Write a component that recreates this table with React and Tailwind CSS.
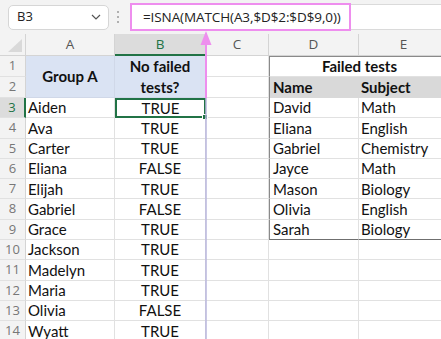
import React from "react";

const grid = "border-r border-b border-[#e1e1e1]";
const cellFont = { fontFamily: "Lato, 'Open Sans', sans-serif" };

const groupA = [
  ["Aiden", "TRUE"],
  ["Ava", "TRUE"],
  ["Carter", "TRUE"],
  ["Eliana", "FALSE"],
  ["Elijah", "TRUE"],
  ["Gabriel", "FALSE"],
  ["Grace", "TRUE"],
  ["Jackson", "TRUE"],
  ["Madelyn", "TRUE"],
  ["Maria", "TRUE"],
  ["Olivia", "FALSE"],
  ["Wyatt", "TRUE"],
];

const failed = [
  ["David", "Math"],
  ["Eliana", "English"],
  ["Gabriel", "Chemistry"],
  ["Jayce", "Math"],
  ["Mason", "Biology"],
  ["Olivia", "English"],
  ["Sarah", "Biology"],
];

function RowNum({ n, active }) {
  return (
    <div
      className={`flex items-center justify-center border-b border-[#e1e1e1] text-[13px] ${
        active
          ? "border-r-2 border-r-[#217346] bg-[#dcdcdc] text-[#217346]"
          : "border-r border-r-[#d4d4d4] bg-[#f3f3f3] text-[#777]"
      }`}
      style={{ fontFamily: "'Open Sans', sans-serif" }}
    >
      {n}
    </div>
  );
}

export default function App() {
  return (
    <div
      className="relative h-[339px] w-[441px] overflow-hidden bg-white"
      style={{ fontFamily: "'Open Sans', 'Noto Sans', sans-serif" }}
    >
      {/* barre de formule */}
      <div className="flex h-[34px] items-center bg-[#f3f3f3]">
        <div className="ml-2 flex h-[25px] w-[101px] items-center justify-between rounded-[5px] border border-[#d6d6d6] bg-white pl-[8px] pr-[6px] text-[13px] text-[#222]">
          <span>B3</span>
          <svg width="12" height="12" viewBox="0 0 12 12">
            <path d="M2 4 L6 8 L10 4" fill="none" stroke="#555" strokeWidth="1.2" />
          </svg>
        </div>
        <div className="ml-[8px] flex flex-col gap-[3px]">
          <span className="h-[2px] w-[2px] rounded-full bg-[#9a9a9a]" />
          <span className="h-[2px] w-[2px] rounded-full bg-[#9a9a9a]" />
          <span className="h-[2px] w-[2px] rounded-full bg-[#9a9a9a]" />
        </div>
        <div className="ml-[11px] flex h-[26px] flex-1 items-center border-y border-[#dadada] bg-white">
          <div className="-my-[2px] flex h-[28px] w-[221px] items-center border-2 border-[#ee8eee] pl-[11px] text-[13.5px] tracking-[-0.1px] text-[#222]">
            =ISNA(MATCH(A3,$D$2:$D$9,0))
          </div>
        </div>
      </div>

      {/* feuille */}
      <div
        className="grid grid-cols-[26px_89px_91px_63px_90px_90px] grid-rows-[22px_21px_21px] auto-rows-[20.3px]"
        style={cellFont}
      >
        {/* en-têtes de colonnes */}
        <div className="relative border-r border-b border-[#d4d4d4] bg-[#f3f3f3]">
          <svg className="absolute right-[3px] bottom-[3px]" width="14" height="13" viewBox="0 0 14 13">
            <polygon points="14,0 14,13 0,13" fill="#d9d9d9" />
          </svg>
        </div>
        <div className="flex items-center justify-center border-r border-b border-[#d4d4d4] bg-[#f3f3f3] text-[13.5px] text-[#555]" style={{ fontFamily: "'Open Sans', sans-serif" }}>A</div>
        <div className="flex items-center justify-center border-r border-b-2 border-r-[#d4d4d4] border-b-[#217346] bg-[#dcdcdc] text-[13.5px] text-[#217346]" style={{ fontFamily: "'Open Sans', sans-serif" }}>B</div>
        <div className="flex items-center justify-center border-r border-b border-[#d4d4d4] bg-[#f3f3f3] text-[13.5px] text-[#555]" style={{ fontFamily: "'Open Sans', sans-serif" }}>C</div>
        <div className="flex items-center justify-center border-r border-b border-[#d4d4d4] bg-[#f3f3f3] text-[13.5px] text-[#555]" style={{ fontFamily: "'Open Sans', sans-serif" }}>D</div>
        <div className="flex items-center justify-center border-r border-b border-[#d4d4d4] bg-[#f3f3f3] text-[13.5px] text-[#555]" style={{ fontFamily: "'Open Sans', sans-serif" }}>E</div>

        {/* ligne 1 */}
        <RowNum n={1} />
        <div className="row-span-2 flex items-center justify-center border-r border-b border-[#d0d8e8] bg-[#dae3f3] text-[15px] font-bold text-[#111]">
          Group A
        </div>
        <div className="row-span-2 flex items-center justify-center border-r border-b border-[#d0d8e8] bg-[#dae3f3] text-center text-[15px] leading-[21px] font-bold text-[#111]">
          No failed
          <br />
          tests?
        </div>
        <div className={grid} />
        <div className="col-span-2 flex items-center justify-center border-t border-l border-b border-[#8a8a8a] border-b-[#e1e1e1] text-[15px] font-bold text-[#111]">
          Failed tests
        </div>

        {/* ligne 2 */}
        <RowNum n={2} />
        <div className={grid} />
        <div className="flex items-center border-l border-[#8a8a8a] bg-[#d9d9d9] pl-[3px] text-[15px] font-bold text-[#111]">Name</div>
        <div className="flex items-center bg-[#d9d9d9] pl-[2px] text-[15px] font-bold text-[#111]">Subject</div>

        {/* données */}
        {groupA.map(([name, ok], i) => {
          const r = i + 3;
          const f = failed[i];
          const last = i === failed.length - 1;
          return (
            <React.Fragment key={r}>
              <RowNum n={r} active={r === 3} />
              <div className={`flex items-center pl-[2px] text-[15px] text-[#111] ${grid}`}>{name}</div>
              <div
                className={`relative flex items-center justify-center text-[15px] text-[#111] ${
                  r === 3 ? "border-2 border-[#217346]" : grid
                }`}
              >
                {ok}
                {r === 3 && (
                  <span className="absolute -right-[4px] -bottom-[4px] h-[6px] w-[6px] border border-white bg-[#217346]" />
                )}
              </div>
              <div className={grid} />
              {f ? (
                <>
                  <div
                    className={`flex items-center border-l border-l-[#8a8a8a] border-r border-r-[#e1e1e1] pl-[3px] text-[15px] text-[#111] ${
                      last ? "border-b border-b-[#6f6f6f]" : "border-b border-b-[#e1e1e1]"
                    }`}
                  >
                    {f[0]}
                  </div>
                  <div
                    className={`flex items-center border-r border-r-[#e1e1e1] pl-[2px] text-[15px] text-[#111] ${
                      last ? "border-b border-b-[#6f6f6f]" : "border-b border-b-[#e1e1e1]"
                    }`}
                  >
                    {f[1]}
                  </div>
                </>
              ) : (
                <>
                  <div className={grid} />
                  <div className={grid} />
                </>
              )}
            </React.Fragment>
          );
        })}
      </div>

      {/* flèche rose vers la formule */}
      <svg className="absolute top-[30px] left-[198px]" width="16" height="309" viewBox="0 0 16 309">
        <line x1="8" y1="12" x2="8" y2="68" stroke="#ee8eee" strokeWidth="2" />
        <line x1="8" y1="68" x2="8" y2="309" stroke="#b9b6dc" strokeWidth="1.5" />
        <polygon points="8,1 2.5,15 13.5,15" fill="#ee8eee" />
      </svg>
    </div>
  );
}
